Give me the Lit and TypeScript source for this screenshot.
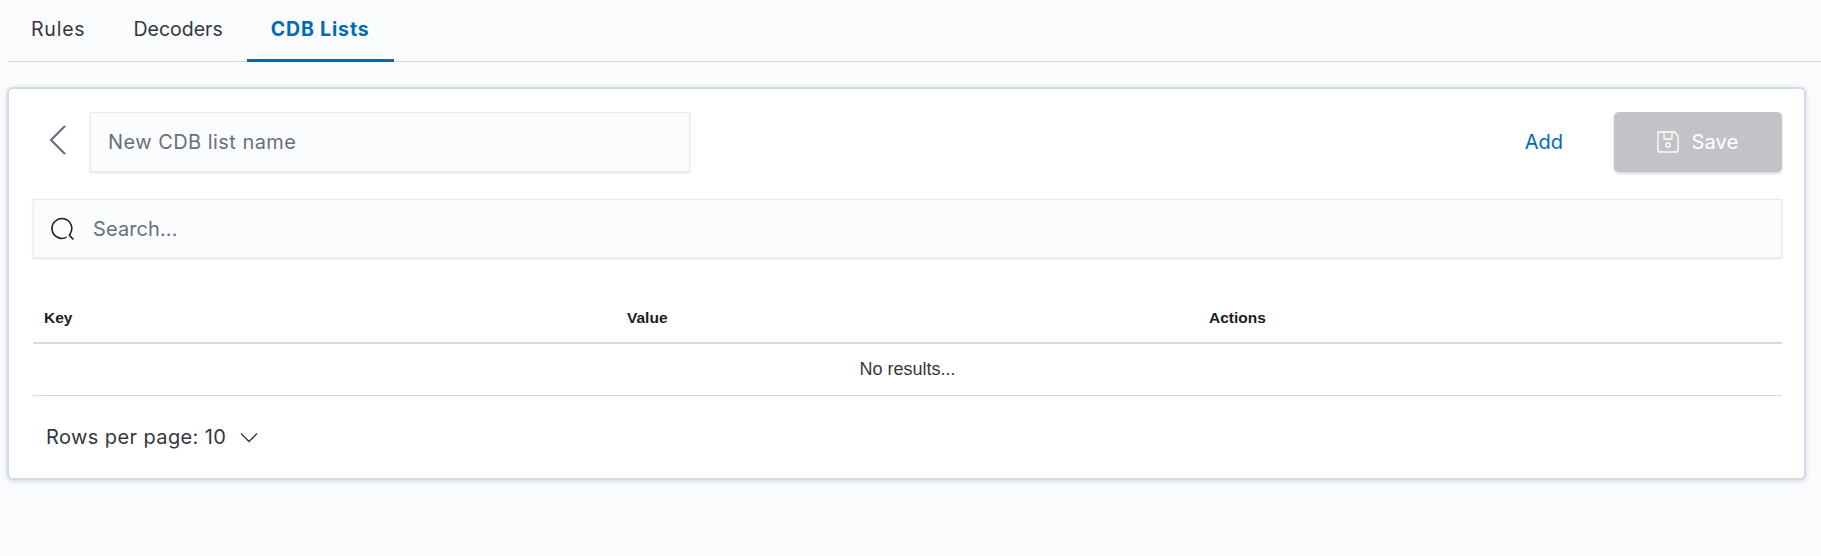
import { LitElement, html, css } from "lit";
import { customElement } from "lit/decorators.js";

@customElement("app-root")
export class AppRoot extends LitElement {
  static styles = css`
    :host { display: block; height: 556px; background: #f9fbfd; font-family: Inter, "Liberation Sans", sans-serif; color: #343741; overflow: hidden; }
    .tabs { display: flex; height: 62px; margin: 0 0 0 7px; border-bottom: 1px solid #d3dae6; box-sizing: border-box; }
    .tab { padding: 0 24px 1px; display: flex; align-items: center; font-size: 19.5px; height: 62px; box-sizing: border-box; border-bottom: 3px solid transparent; }
    .tab.rules { letter-spacing: .8px; }
    .tab.active { color: #006bb4; font-weight: 700; letter-spacing: .85px; border-bottom-color: #006bb4; }
    .panel { margin: 25px 15px 0 7px; height: 393px; box-sizing: border-box; background: #fff; border: 2px solid #d3dae6; border-radius: 6px; box-shadow: 0 1px 4px rgba(152,162,179,.45); padding: 23px 22px 0 24px; }
    .top { display: flex; align-items: center; height: 60px; }
    .back { width: 57px; display: flex; padding: 0 0 4px 16px; box-sizing: border-box; }
    .field { background: #fbfcfd; border: 1px solid #e6ebf3; box-shadow: 0 1px 2px rgba(152,162,179,.3); box-sizing: border-box; color: #69707d; font-size: 20px; display: flex; align-items: center; }
    .name { width: 600px; height: 60px; padding-left: 17px; letter-spacing: .45px; }
    .spacer { flex: 1; }
    .add { color: #006bb4; font-size: 20px; margin-right: 51px; }
    .save { width: 168px; height: 60px; background: #c2c3c6; border-radius: 5px; box-shadow: 0 2px 3px rgba(152,162,179,.4); color: #fff; font-size: 20px; letter-spacing: .2px; display: flex; align-items: center; justify-content: center; gap: 12px; }
    .search { height: 59px; margin-top: 27px; padding-left: 17px; gap: 17px; letter-spacing: .1px; }
    .head { display: grid; grid-template-columns: 583px 582px 1fr; height: 86px; align-items: end; padding: 0 0 0 11px; border-bottom: 2px solid #d3dae6; box-sizing: border-box; font: bold 15.5px "Liberation Sans", Arial, sans-serif; color: #1a1c21; }
    .head span { padding-bottom: 15px; }
    .row { height: 52px; border-bottom: 1px solid #d3dae6; display: flex; align-items: center; justify-content: center; box-sizing: border-box; font: 18px "Liberation Sans", Arial, sans-serif; color: #343741; }
    .foot { display: flex; align-items: center; gap: 14px; margin-top: 20px; padding-left: 13px; font-size: 20px; letter-spacing: .4px; height: 42px; }
    svg { display: block; flex: none; }
  `;

  render() {
    return html`
      <div class="tabs">
        <div class="tab rules">Rules</div>
        <div class="tab">Decoders</div>
        <div class="tab active">CDB Lists</div>
      </div>
      <div class="panel">
        <div class="top">
          <div class="back">
            <svg width="17" height="30" viewBox="0 0 17 30" fill="none" stroke="#69707d" stroke-width="2.2"><path d="M16 1 2 15l14 14"/></svg>
          </div>
          <div class="field name">New CDB list name</div>
          <div class="spacer"></div>
          <div class="add">Add</div>
          <div class="save">
            <svg width="22" height="22" viewBox="0 0 22 22" fill="none" stroke="#fff" stroke-width="1.3"><path d="M1.5 1h16l3.5 4v15a1 1 0 0 1-1 1H2a1 1 0 0 1-1-1V1.5z"/><path d="M7 1v6a1 1 0 0 0 1 1h6a1 1 0 0 0 1-1V1"/><circle cx="11" cy="14" r="2.2"/></svg>
            Save
          </div>
        </div>
        <div class="field search">
          <svg width="25" height="25" viewBox="0 0 24 24" fill="none" stroke="#1a1c21" stroke-width="1.5"><path d="M15 20.3A9.5 9.5 0 1 1 18.5 17l-.8 1.5 3.8 4"/></svg>
          Search...
        </div>
        <div class="head"><span>Key</span><span>Value</span><span>Actions</span></div>
        <div class="row">No results...</div>
        <div class="foot">
          Rows per page: 10
          <svg width="18" height="11" viewBox="0 0 18 11" fill="none" stroke="#343741" stroke-width="1.3"><path d="M1 1.5l8 8 8-8"/></svg>
        </div>
      </div>
    `;
  }
}
